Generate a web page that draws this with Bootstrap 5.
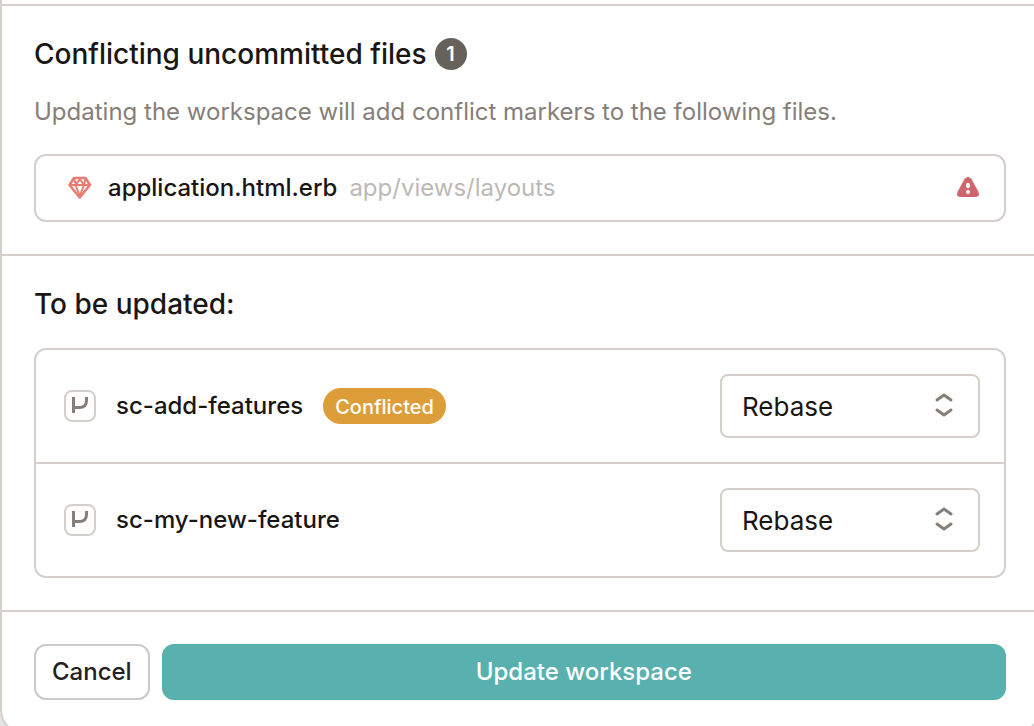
<!DOCTYPE html>
<html lang="en">
<head>
<meta charset="utf-8">
<meta name="viewport" content="width=device-width, initial-scale=1">
<title>Update workspace</title>
<link href="https://cdn.jsdelivr.net/npm/bootstrap@5.3.0/dist/css/bootstrap.min.css" rel="stylesheet">
<style>
  :root { --line: #d4cfcc; --ink: #1a1614; --muted: #867e79; }
  body { font-family: Inter, "Liberation Sans", sans-serif; color: var(--ink); background: #e4e4e4; font-size: 24px; line-height: 32px; overflow-x: hidden; scrollbar-width: none; }
  body::-webkit-scrollbar { display: none; }
  .dialog { background: #fff; border: 2px solid var(--line); border-top: 0; border-radius: 0 0 24px 24px; margin-right: -6px; }
  .dialog-top { height: 4px; }
  .pane { border-top: 2px solid var(--line); padding: 32px; }
  .pane-title { font-size: 28px; line-height: 32px; font-weight: 500; }
  .count { width: 32px; height: 32px; font-size: 20px; font-weight: 600; background: #66615b; color: #fff; }
  .note { color: var(--muted); line-height: 36px; }
  .box { border: 2px solid var(--line); border-radius: 12px; }
  .file { padding: 16px 24px 16px 32px; }
  .path { color: #bdb9b6; margin-left: 12px; }
  .branches { margin-top: 28px; }
  .branch { padding: 24px 24px 24px 28px; gap: 20px; }
  .branch + .branch { border-top: 2px solid var(--line); }
  .tag { background: #dd9d38; color: #fff; font-size: 20px; line-height: 34px; padding: 2px 12px 0; font-weight: 500; }
  .mode { width: 260px; }
  .mode select { height: 64px; font-size: 26px; line-height: 32px; padding: 2px 20px 0; border: 2px solid var(--line); border-radius: 8px; background-image: none; color: var(--ink); }
  .mode svg { position: absolute; right: 24px; top: 19px; pointer-events: none; }
  .actions { gap: 12px; }
  .action { height: 56px; font-size: 24px; line-height: 32px; font-weight: 500; border-radius: 12px; padding: 0 16px; }
  .action-cancel { border: 2px solid #cccac9; color: #24211f; background: #fff; }
  .action-update { background: #58b1ae; color: #fff; border: 0; }
</style>
</head>
<body>
<main class="dialog">
  <div class="dialog-top"></div>
  <section class="pane">
    <div class="d-flex align-items-center gap-2 mb-4">
      <h2 class="pane-title mb-0">Conflicting uncommitted files</h2>
      <span class="count rounded-circle d-flex align-items-center justify-content-center">1</span>
    </div>
    <p class="note mb-4">Updating the workspace will add conflict markers to the following files.</p>
    <div class="box file d-flex align-items-center">
      <svg class="me-3" width="24" height="24" viewBox="0 0 24 24" fill="none" stroke="#ea7c73" stroke-width="2.600" stroke-linejoin="round" aria-hidden="true"><path d="M6 2h11.500l4.500 7-10.300 12.500L1.500 9z"/><path stroke-width="2" d="M1.500 9H22M7.500 9l4.200 11L16 9M8 9l3.700-6L16 9M6 2l2 7M17.500 2L16 9"/></svg>
      <span class="fw-medium">application.html.erb</span>
      <span class="path flex-grow-1">app/views/layouts</span>
      <svg width="24" height="24" viewBox="0 0 24 24" role="img" aria-label="Conflict"><path fill="#cf666d" d="M8.500 3q3.500-4.200 7 0l6.800 12.500q2.200 5.500-3 5.500H4.700q-5.200 0-3-5.500z"/><ellipse cx="12" cy="9.500" rx="2" ry="2.800" fill="#fff"/><circle cx="12" cy="16" r="2" fill="#fff"/></svg>
    </div>
  </section>
  <section class="pane">
    <h2 class="pane-title mb-0">To be updated:</h2>
    <div class="box branches">
      <div class="branch d-flex align-items-center">
        <svg width="32" height="32" viewBox="0 0 32 32" fill="none" aria-hidden="true"><rect x="1" y="1" width="30" height="30" rx="7" stroke="#d4cfcc" stroke-width="2"/><path d="M9.500 7v16M9.500 17.500H15q7.500 0 7.500-7V7" stroke="#867e79" stroke-width="3"/></svg>
        <label class="fw-medium" for="mode-a">sc-add-features</label>
        <span class="tag rounded-pill">Conflicted</span>
        <div class="mode position-relative ms-auto">
          <select id="mode-a" class="form-select"><option>Rebase</option><option>Merge</option></select>
          <svg width="24" height="24" viewBox="0 0 24 24" fill="none" stroke="#867e79" stroke-width="3" stroke-linecap="round" stroke-linejoin="round" aria-hidden="true"><path d="M5 7l7-5 7 5M5 17l7 5 7-5"/></svg>
        </div>
      </div>
      <div class="branch d-flex align-items-center">
        <svg width="32" height="32" viewBox="0 0 32 32" fill="none" aria-hidden="true"><rect x="1" y="1" width="30" height="30" rx="7" stroke="#d4cfcc" stroke-width="2"/><path d="M9.500 7v16M9.500 17.500H15q7.500 0 7.500-7V7" stroke="#867e79" stroke-width="3"/></svg>
        <label class="fw-medium" for="mode-b">sc-my-new-feature</label>
        <div class="mode position-relative ms-auto">
          <select id="mode-b" class="form-select"><option>Rebase</option><option>Merge</option></select>
          <svg width="24" height="24" viewBox="0 0 24 24" fill="none" stroke="#867e79" stroke-width="3" stroke-linecap="round" stroke-linejoin="round" aria-hidden="true"><path d="M5 7l7-5 7 5M5 17l7 5 7-5"/></svg>
        </div>
      </div>
    </div>
  </section>
  <footer class="pane actions d-flex">
    <button type="button" class="btn action action-cancel">Cancel</button>
    <button type="button" class="btn action action-update flex-grow-1">Update workspace</button>
  </footer>
</main>
<script src="https://cdn.jsdelivr.net/npm/bootstrap@5.3.0/dist/js/bootstrap.bundle.min.js"></script>
</body>
</html>
